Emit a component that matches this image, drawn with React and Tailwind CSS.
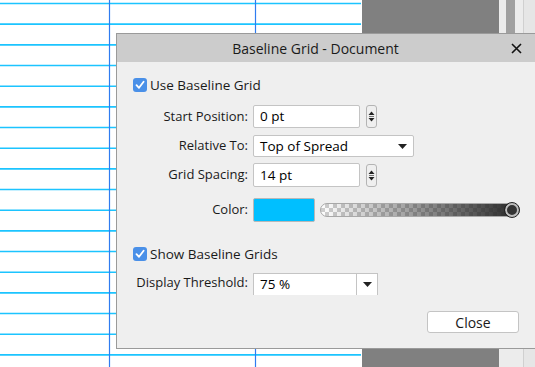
import React from 'react';

const font = { fontFamily: '"Open Sans", "Noto Sans", sans-serif' };

// baseline grid lines drawn on the page canvas
const GridCanvas = () => {
  const rows = Array.from({ length: 18 }, (_, i) => 3.5 + i * 20.67);
  return (
    <svg width="362" height="367" className="block">
      <rect width="362" height="367" fill="#ffffff" />
      {rows.map((y) => (
        <line key={y} x1="0" x2="361" y1={y} y2={y} stroke="#1cc4ff" strokeWidth="1.6" />
      ))}
      <line x1="109.5" x2="109.5" y1="0" y2="367" stroke="#2f7cf0" strokeWidth="1.2" />
      <line x1="255.5" x2="255.5" y1="0" y2="367" stroke="#2f7cf0" strokeWidth="1.2" />
    </svg>
  );
};

const Check = () => (
  <span className="w-[14px] h-[14px] rounded-[3px] bg-[#4a90e8] flex items-center justify-center">
    <svg width="10" height="10" viewBox="0 0 10 10">
      <path d="M1.5 5.2 L4 7.8 L8.6 1.8" fill="none" stroke="#fff" strokeWidth="1.8" strokeLinecap="round" strokeLinejoin="round" />
    </svg>
  </span>
);

const Stepper = () => (
  <span className="ml-[6px] w-[11px] h-[23px] rounded-[3px] border border-[#b4b4b4] flex items-center justify-center">
    <svg width="7" height="13" viewBox="0 0 7 13">
      <path d="M0.5 5 L3.5 1.5 L6.5 5 Z" fill="#222" />
      <line x1="1" x2="6" y1="6.5" y2="6.5" stroke="#777" strokeWidth="1" />
      <path d="M0.5 8 L3.5 11.5 L6.5 8 Z" fill="#222" />
    </svg>
  </span>
);

const Caret = () => (
  <svg width="9" height="5" viewBox="0 0 9 5">
    <path d="M0 0 L9 0 L4.5 5 Z" fill="#222" />
  </svg>
);

const Label = ({ children }) => (
  <span className="w-[136px] pr-[5px] text-right text-[13px] text-[#1a1a1a]">{children}</span>
);

const App = () => {
  return (
    <div className="relative w-[535px] h-[367px] overflow-hidden flex" style={font}>
      <GridCanvas />
      <div className="w-[137px] h-full bg-[#808080]" />
      <div className="w-[24px] h-full bg-[#ececec] flex">
        <div className="ml-[7px] w-[9px] h-[140px] bg-[#a0a0a0]" />
      </div>
      <div className="w-[12px] h-full bg-[#e6e6e6] border-l border-[#d0d0d0]" />

      {/* dialog window */}
      <div className="absolute left-[116px] top-[33px] w-[440px] h-[316px] border border-[#9a9a9a] bg-[#efefef] flex flex-col">
        <div className="h-[28px] bg-[#cccccc] flex items-center">
          <span className="flex-1 pl-[10px] text-center text-[14px] text-[#1a1a1a]">Baseline Grid - Document</span>
          <span className="w-[51px] flex items-center pl-[7px]">
            <svg width="11" height="11" viewBox="0 0 11 11">
              <path d="M1 1 L10 10 M10 1 L1 10" stroke="#111" strokeWidth="1.6" />
            </svg>
          </span>
        </div>

        <div className="flex flex-col">
          <div className="mt-[16px] ml-[16px] h-[14px] flex items-center gap-[3px]">
            <Check />
            <span className="text-[13.5px] text-[#1a1a1a]">Use Baseline Grid</span>
          </div>

          <div className="mt-[13px] h-[23px] flex items-center">
            <Label>Start Position:</Label>
            <span className="w-[107px] h-[23px] bg-white border border-[#c4c4c4] rounded-[2px] pl-[6px] text-[13.5px] flex items-center">0 pt</span>
            <Stepper />
          </div>

          <div className="mt-[7px] h-[22px] flex items-center">
            <Label>Relative To:</Label>
            <span className="w-[161px] h-[22px] bg-white border border-[#c4c4c4] rounded-[2px] pl-[6px] pr-[6px] text-[13.5px] flex items-center justify-between">
              Top of Spread
              <Caret />
            </span>
          </div>

          <div className="mt-[6px] h-[24px] flex items-center">
            <Label>Grid Spacing:</Label>
            <span className="w-[107px] h-[24px] bg-white border border-[#c4c4c4] rounded-[2px] pl-[6px] text-[13.5px] flex items-center">14 pt</span>
            <Stepper />
          </div>

          <div className="mt-[11px] h-[24px] flex items-center">
            <Label>Color:</Label>
            <span className="w-[62px] h-[24px] bg-[#00bfff] border border-[#b8b8b8] rounded-[2px]" />
            <span className="ml-[5px] w-[200px] h-[14px] rounded-full border border-[#a8a8a8] flex items-center justify-end [background:linear-gradient(to_right,rgba(40,40,40,0),rgba(40,40,40,1)),repeating-conic-gradient(#cfcfcf_0_25%,#ffffff_0_50%)_0_0/8px_8px]">
              <span className="w-[14px] h-[14px] rounded-full bg-[#333] border-2 border-[#bdbdbd] outline outline-1 outline-[#222]" />
            </span>
          </div>

          <div className="mt-[25px] ml-[16px] h-[14px] flex items-center gap-[3px]">
            <Check />
            <span className="text-[13.5px] text-[#1a1a1a]">Show Baseline Grids</span>
          </div>

          <div className="mt-[12px] h-[22px] flex items-start">
            <Label>Display Threshold:</Label>
            <span className="w-[104px] h-[22px] bg-white border border-b-0 border-[#c4c4c4] pl-[6px] text-[13.5px] flex items-center">75 %</span>
            <span className="w-[21px] h-[22px] bg-white border border-l-0 border-b-0 border-[#c4c4c4] flex items-center justify-center">
              <Caret />
            </span>
          </div>

          <div className="mt-[16px] ml-[310px] w-[92px] h-[22px] bg-white border border-[#c4c4c4] rounded-[3px] flex items-center justify-center text-[14px] text-[#1a1a1a]">
            Close
          </div>
        </div>
      </div>
    </div>
  );
};

export default App;
